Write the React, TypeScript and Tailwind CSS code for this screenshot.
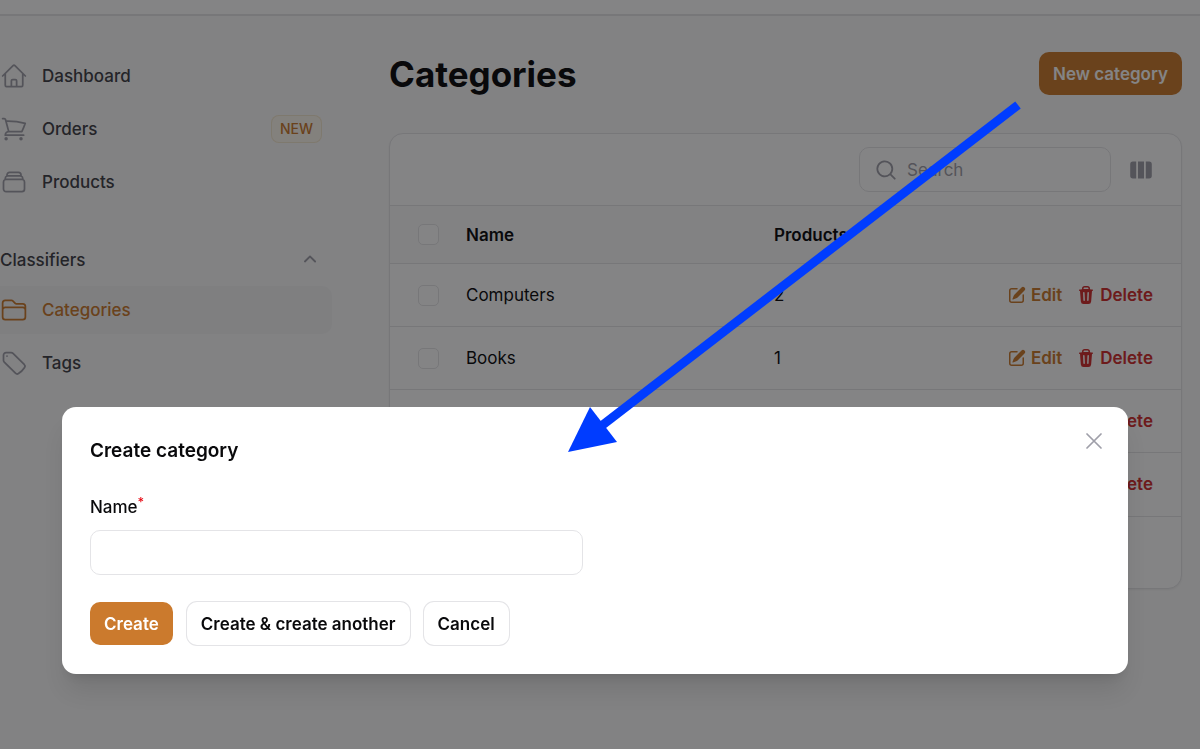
import { useState } from "react";
import {
  HiOutlineHome,
  HiOutlineShoppingCart,
  HiOutlineRectangleStack,
  HiOutlineFolder,
  HiOutlineTag,
  HiOutlineXMark,
  HiMiniChevronUp,
  HiMiniMagnifyingGlass,
  HiMiniViewColumns,
  HiMiniPencilSquare,
  HiMiniTrash,
} from "react-icons/hi2";

const mainLinks = [
  { label: "Dashboard", icon: HiOutlineHome },
  { label: "Orders", icon: HiOutlineShoppingCart, badge: "NEW" },
  { label: "Products", icon: HiOutlineRectangleStack },
];

const classifierLinks = [
  { label: "Categories", icon: HiOutlineFolder, active: true },
  { label: "Tags", icon: HiOutlineTag },
];

const categories = [
  { id: 1, name: "Computers", products: "2" },
  { id: 2, name: "Books", products: "1" },
  { id: 3, name: "", products: "" },
  { id: 4, name: "", products: "" },
];

const checkboxClass =
  "block size-[21px] appearance-none rounded-[5px] border border-zinc-200 bg-white checked:bg-[#cb7a2d]";

function NavItem({ label, icon: Icon, badge, active }: any) {
  return (
    <li>
      <a
        href="#"
        className={`flex h-12 items-center gap-[14px] rounded-[10px] px-[10px] font-medium ${
          active ? "bg-[#f4f4f5] text-[#cb7a2d]" : "text-zinc-700"
        }`}
      >
        <Icon className={`size-7 shrink-0 ${active ? "text-[#cb7a2d]" : "text-zinc-400"}`} />
        <span className="flex-1">{label}</span>
        {badge && (
          <span className="rounded-lg bg-[#fdf8ef] px-[9px] py-1 text-sm leading-5 text-[#cb7a2d] ring-1 ring-[#f3e8d0] ring-inset">
            {badge}
          </span>
        )}
      </a>
    </li>
  );
}

function Sidebar() {
  return (
    <nav className="-ml-[10px] flex w-[342px] shrink-0 flex-col gap-[30px] pt-9">
      <ul className="flex flex-col gap-[5px]">
        {mainLinks.map((link) => (
          <NavItem key={link.label} {...link} />
        ))}
      </ul>
      <div>
        <button
          type="button"
          className="flex h-12 w-full items-center justify-between px-[10px] font-medium text-zinc-700"
        >
          Classifiers
          <HiMiniChevronUp className="size-6 text-zinc-400" />
        </button>
        <ul className="mt-[2px] flex flex-col gap-[5px]">
          {classifierLinks.map((link) => (
            <NavItem key={link.label} {...link} />
          ))}
        </ul>
      </div>
    </nav>
  );
}

function CategoriesTable() {
  return (
    <section className="mt-[38px] overflow-hidden rounded-[14px] border border-zinc-200 bg-white shadow-xs">
      <div className="flex h-[71px] items-center justify-end gap-[18px] pr-7">
        <label className="flex h-[45px] w-[252px] items-center gap-[9px] rounded-[10px] border border-zinc-200 px-[14px]">
          <HiMiniMagnifyingGlass className="size-6 shrink-0 text-zinc-400" />
          <input
            type="search"
            aria-label="Search"
            placeholder="Search"
            className="w-full min-w-0 bg-transparent outline-none placeholder:text-zinc-400"
          />
        </label>
        <button type="button" aria-label="Toggle columns" className="text-zinc-400">
          <HiMiniViewColumns className="size-6" />
        </button>
      </div>
      <table className="w-full table-fixed text-left text-zinc-950">
        <thead>
          <tr className="h-[58px] border-t border-zinc-200 bg-zinc-50">
            <th className="w-[76px] pl-7">
              <input type="checkbox" aria-label="Select all" className={checkboxClass} />
            </th>
            <th className="w-[308px] font-semibold">Name</th>
            <th className="font-semibold">Products</th>
            <th className="w-[210px]"></th>
          </tr>
        </thead>
        <tbody>
          {categories.map((category) => (
            <tr key={category.id} className="h-[63px] border-t border-zinc-200">
              <td className="pl-7">
                <input type="checkbox" aria-label={`Select ${category.name}`} className={checkboxClass} />
              </td>
              <td>{category.name}</td>
              <td>{category.products}</td>
              <td className="pr-7">
                <div className="flex justify-end gap-[14px] font-semibold">
                  <a href="#" className="flex items-center gap-1 text-[#cb7a2d]">
                    <HiMiniPencilSquare className="size-5" />
                    Edit
                  </a>
                  <a href="#" className="flex items-center gap-1 text-[#d02c2c]">
                    <HiMiniTrash className="size-5" />
                    Delete
                  </a>
                </div>
              </td>
            </tr>
          ))}
        </tbody>
      </table>
      <div className="h-[72px] border-t border-zinc-200" />
    </section>
  );
}

function CreateModal() {
  const [name, setName] = useState("");

  return (
    <div className="fixed inset-0 flex flex-col justify-end bg-zinc-950/50 pr-[72px] pb-[75px] pl-[62px]">
      <div
        role="dialog"
        aria-labelledby="modal-title"
        className="relative rounded-[14px] bg-white px-7 pt-[30px] pb-[29px] text-zinc-950 shadow-xl"
      >
        <button type="button" aria-label="Close" className="absolute top-5 right-5 text-zinc-400">
          <HiOutlineXMark className="size-7" />
        </button>
        <h2 id="modal-title" className="text-[19px] leading-7 font-semibold">
          Create category
        </h2>
        <form className="mt-7">
          <div className="grid grid-cols-2 gap-6">
            <div>
              <label htmlFor="name" className="block leading-7 font-medium">
                Name
                <sup className="font-medium text-red-600">*</sup>
              </label>
              <input
                id="name"
                type="text"
                value={name}
                onChange={(e) => setName(e.target.value)}
                className="mt-[9px] block h-[45px] w-full rounded-[10px] border border-zinc-200 px-[14px] outline-none"
              />
            </div>
          </div>
          <div className="mt-[27px] flex gap-[14px] font-semibold">
            <button type="submit" className="h-[43px] rounded-[10px] bg-[#cb7a2d] px-[14px] text-white">
              Create
            </button>
            <button type="button" className="h-[43px] rounded-[10px] px-[14px] ring-1 ring-zinc-200">
              Create &amp; create another
            </button>
            <button type="button" className="h-[43px] rounded-[10px] px-[14px] ring-1 ring-zinc-200">
              Cancel
            </button>
          </div>
        </form>
      </div>
    </div>
  );
}

export default function App() {
  return (
    <div className="min-h-screen overflow-hidden bg-zinc-50 font-['Inter',sans-serif] text-[17px] leading-7">
      <header className="h-4 border-b-2 border-zinc-200 bg-white" />
      <div className="flex gap-[57px] pr-[18px]">
        <Sidebar />
        <main className="flex-1 pt-9">
          <div className="flex items-center justify-between">
            <h1 className="text-[35px] leading-10 font-bold text-zinc-950">Categories</h1>
            <button type="button" className="h-[43px] rounded-[10px] bg-[#cb7a2d] px-[14px] font-semibold text-white">
              New category
            </button>
          </div>
          <CategoriesTable />
        </main>
      </div>
      <CreateModal />
      {arrow}
    </div>
  );
}

const arrow = <svg className="pointer-events-none absolute top-[101px] left-[568px] h-[351px] w-[453px]" viewBox="568 101 453 351" fill="none">
  <path d="M1018 105L600 427" stroke="#003cff" strokeWidth={9} />
  <path d="M568 452L590 407L617 442Z" fill="#003cff" />
</svg>
